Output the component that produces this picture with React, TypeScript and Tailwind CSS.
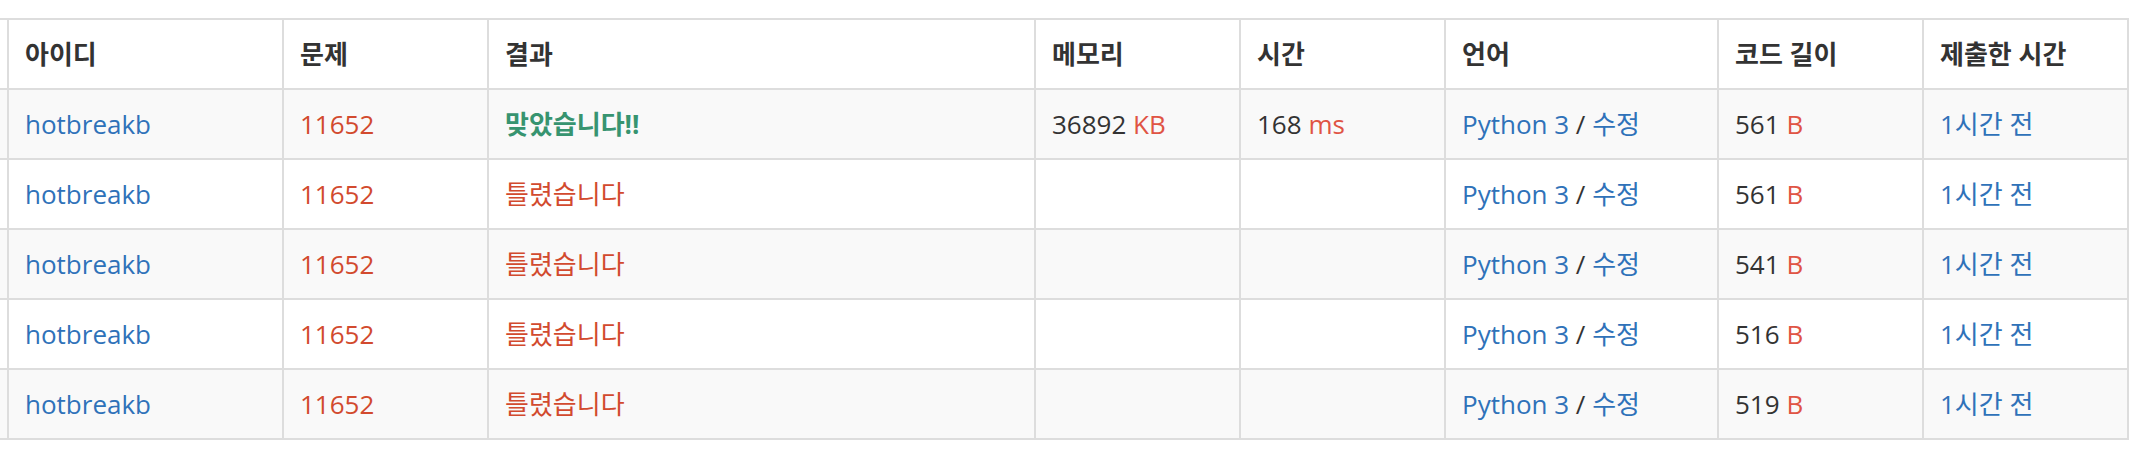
const rows = [
  { user: 'hotbreakb', problem: '11652', ok: true, memory: '36892', time: '168', length: '561' },
  { user: 'hotbreakb', problem: '11652', ok: false, memory: '', time: '', length: '561' },
  { user: 'hotbreakb', problem: '11652', ok: false, memory: '', time: '', length: '541' },
  { user: 'hotbreakb', problem: '11652', ok: false, memory: '', time: '', length: '516' },
  { user: 'hotbreakb', problem: '11652', ok: false, memory: '', time: '', length: '519' },
];

const headers = ['아이디', '문제', '결과', '메모리', '시간', '언어', '코드 길이', '제출한 시간'];
const widths = ['w-[8px]', 'w-[275px]', 'w-[205px]', 'w-[547px]', 'w-[205px]', 'w-[205px]', 'w-[273px]', 'w-[205px]', 'w-[205px]'];

const cell = 'border-2 border-[#dddddd] px-4 py-[15px] leading-[38px] text-left align-top whitespace-nowrap';

export default function App() {
  return (
    <div className="min-h-screen bg-white pt-[18px] text-[26px] text-[#333333] font-['Open_Sans','Noto_Sans_CJK_KR',sans-serif]">
      <table className="table-fixed border-collapse w-[2128px]">
        <colgroup>
          {widths.map((w, i) => (
            <col key={i} className={w} />
          ))}
        </colgroup>
        <thead>
          <tr className="bg-white">
            <th className="border-2 border-l-0 border-[#dddddd] p-0"></th>
            {headers.map((h) => (
              <th key={h} className={`${cell} font-bold`}>
                {h}
              </th>
            ))}
          </tr>
        </thead>
        <tbody>
          {rows.map((r, i) => (
            <tr key={i} className={i % 2 === 0 ? 'bg-[#f9f9f9]' : 'bg-white'}>
              <td className="border-2 border-l-0 border-[#dddddd] p-0"></td>
              <td className={cell}>
                <span className="text-[#2f72b9]">{r.user}</span>
              </td>
              <td className={cell}>
                <span className="text-[#d24a2e]">{r.problem}</span>
              </td>
              <td className={cell}>
                {r.ok ? (
                  <span className="font-bold text-[#379470]">맞았습니다!!</span>
                ) : (
                  <span className="text-[#d24a2e]">틀렸습니다</span>
                )}
              </td>
              <td className={cell}>
                {r.memory && (
                  <>
                    {r.memory} <span className="text-[#e05444]">KB</span>
                  </>
                )}
              </td>
              <td className={cell}>
                {r.time && (
                  <>
                    {r.time} <span className="text-[#e05444]">ms</span>
                  </>
                )}
              </td>
              <td className={cell}>
                <span className="text-[#2f72b9]">Python 3</span> / <span className="text-[#2f72b9]">수정</span>
              </td>
              <td className={cell}>
                {r.length} <span className="text-[#e05444]">B</span>
              </td>
              <td className={cell}>
                <span className="text-[#2f72b9]">1시간 전</span>
              </td>
            </tr>
          ))}
        </tbody>
      </table>
    </div>
  );
}
